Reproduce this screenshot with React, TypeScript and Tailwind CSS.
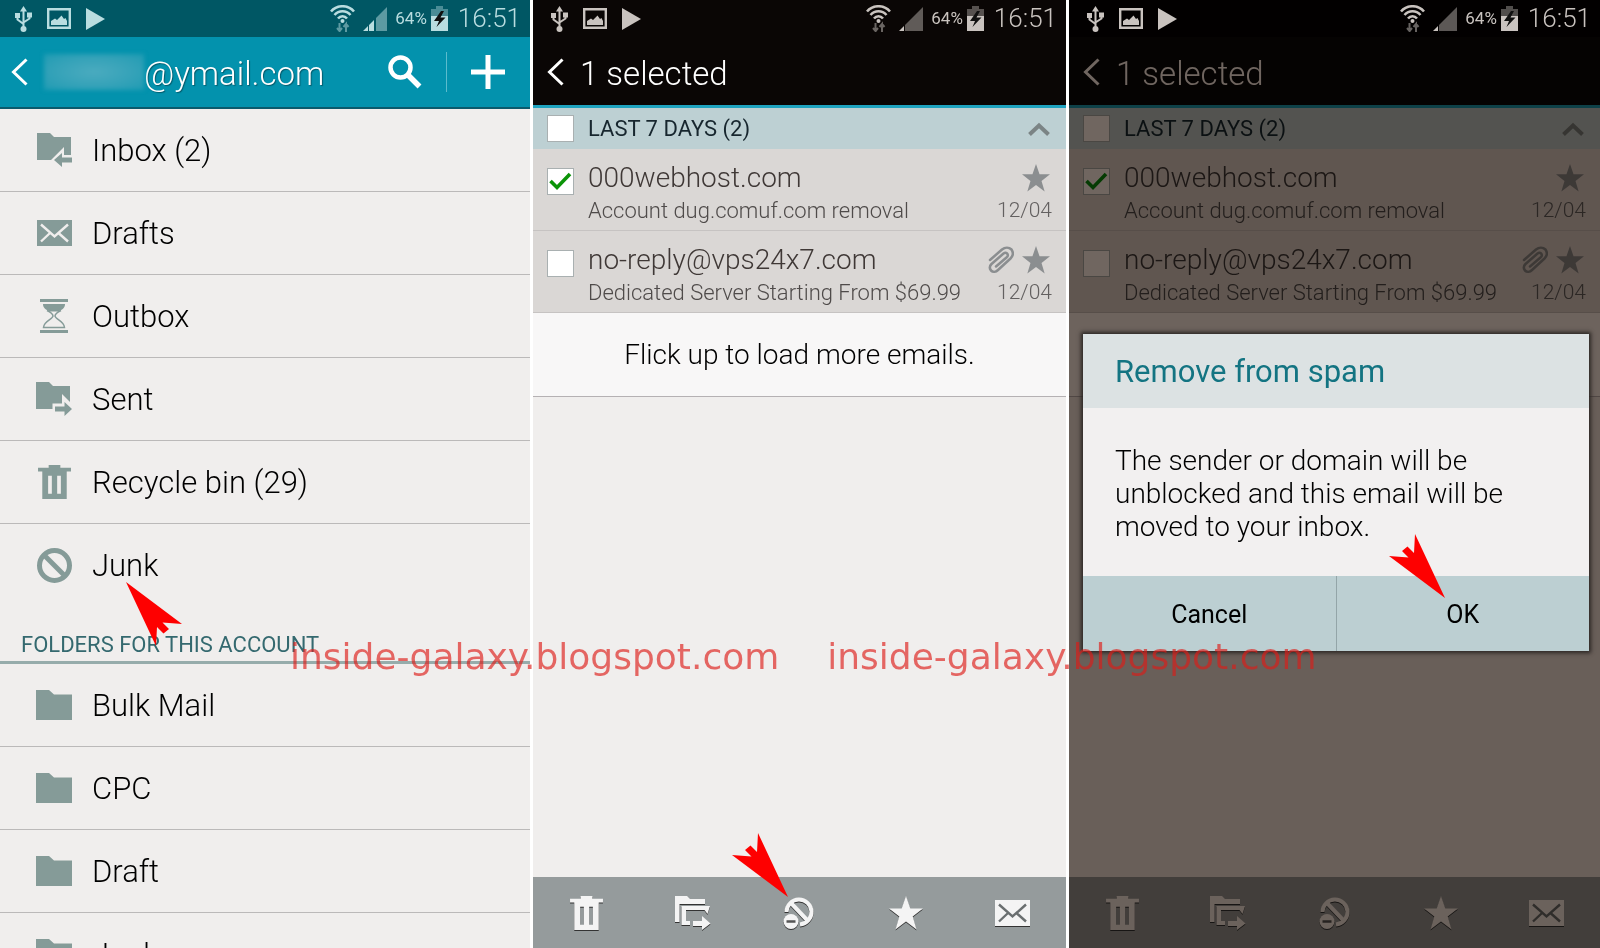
import type { ReactNode } from 'react'

const menuFolders = [
  { label: 'Inbox (2)', icon: <FolderInIcon /> },
  { label: 'Drafts', icon: <EnvelopeIcon line="#f0eeed" /> },
  { label: 'Outbox', icon: <HourglassIcon /> },
  { label: 'Sent', icon: <FolderOutIcon /> },
  { label: 'Recycle bin (29)', icon: <TrashIcon /> },
]

const accountFolders = ['Bulk Mail', 'CPC', 'Draft', 'Junk']

const emails = [
  { sender: '000webhost.com', subject: 'Account dug.comuf.com removal', date: '12/04', checked: true, attachment: false },
  { sender: 'no-reply@vps24x7.com', subject: 'Dedicated Server Starting From $69.99', date: '12/04', checked: false, attachment: true },
]

function FolderInIcon() {
  return (
    <svg width="35" height="34" viewBox="0 0 35 34" fill="currentColor">
      <path d="M0 0H13L17 4H34V22H27V14L14 27H0Z" />
      <path d="M17 27L25 20V24.5H35V29.5H25V34Z" />
    </svg>
  )
}

function FolderOutIcon() {
  return (
    <svg width="36" height="34" viewBox="0 0 36 34" fill="currentColor">
      <path d="M0 0H13L17 4H34V20L26 12V21.5H16.5V27H0Z" />
      <path d="M19 24.5H28.5V20L36 27L28.5 34V29.5H19Z" />
    </svg>
  )
}

function FolderIcon() {
  return (
    <svg width="36" height="30" viewBox="0 0 36 30" fill="currentColor">
      <path d="M0 0H13L18 4.5H36V30H0Z" />
    </svg>
  )
}

function EnvelopeIcon({ line }: { line: string }) {
  return (
    <svg width="35" height="26" viewBox="0 0 35 26" fill="none">
      <path d="M0 0H35V26H0Z" fill="currentColor" />
      <path d="M4 4.5L17.5 16.5L31 4.5M4 21.5L12.5 13.5M31 21.5L22 13.5" stroke={line} strokeWidth="2.4" />
    </svg>
  )
}

function HourglassIcon() {
  return (
    <svg width="28" height="34" viewBox="0 0 28 34" fill="none">
      <path d="M0 0H28V3H0ZM0 31H28V34H0Z" fill="currentColor" />
      <path d="M3 5H25C25 9 22 11 18 12.5H10C6 11 3 9 3 5Z" fill="currentColor" />
      <path d="M7 11.5C10 13 13 15 13 17C13 20 3.5 22 3.5 28.5H24.5C24.5 22 15 20 15 17C15 15 18 13 21 11.5" stroke="currentColor" strokeWidth="1.5" />
    </svg>
  )
}

function TrashIcon() {
  return (
    <svg width="33" height="34" viewBox="0 0 31 32" fill="currentColor">
      <path fillRule="evenodd" d="M10 0H21V2.5H31V6H27V32H4V6H0V2.5H10ZM9.5 10V27H13V10ZM18 10V27H21.5V10Z" />
    </svg>
  )
}

function BlockIcon() {
  return (
    <svg width="35" height="35" viewBox="0 0 35 35" fill="none" stroke="currentColor" strokeWidth="5">
      <circle cx="17.5" cy="17.5" r="15" />
      <path d="M7 7L28 28" />
    </svg>
  )
}

function MoveIcon() {
  return (
    <svg width="36" height="34" viewBox="0 0 36 34" fill="currentColor">
      <path d="M0 0H12L15 3H30V8H4.5V26H0Z" />
      <path d="M6.5 10H35L32.5 18L29.5 14H11V25H15V29H6.5Z" />
      <path d="M18 25H27V20L35.5 27.5L27 34V30H18Z" />
    </svg>
  )
}

function NotSpamIcon() {
  return (
    <svg width="32" height="34" viewBox="0 0 32 34" fill="none">
      <path d="M3.5 16A12.500 12.500 0 1 1 17 28.500" stroke="currentColor" strokeWidth="4" />
      <path d="M7 6L25 25" stroke="currentColor" strokeWidth="4" />
      <circle cx="8" cy="25.5" r="7.5" fill="currentColor" />
      <path d="M3.5 25.5H12.5" stroke="#555" strokeWidth="2.5" />
    </svg>
  )
}

function StarIcon({ size }: { size: number }) {
  return (
    <svg width={size} height={size} viewBox="0 0 34 34" fill="currentColor">
      <path d="M17 0L21.3 12.5H34L23.7 20.5L27.5 33.5L17 25.6L6.5 33.5L10.3 20.5L0 12.5H12.7Z" />
    </svg>
  )
}

function ClipIcon() {
  return (
    <svg width="26" height="28" viewBox="0 0 26 28" fill="none" stroke="currentColor" strokeWidth="2.5" strokeLinecap="round" strokeLinejoin="round">
      <path d="M2 14L14 3.5C17 1 21 1 23.5 3.5C25.5 6.5 25 10 22.5 12.5L10 24C8 26 5 26.5 3 24.5C1.5 22.5 1.5 20 3.5 18L15.5 7.5C17 6.5 18.5 6.5 19.5 8C20.3 9.5 19.8 10.5 18.5 11.5L8 20.5" />
    </svg>
  )
}

function ChevronLeft() {
  return (
    <svg width="17" height="28" viewBox="0 0 17 28" fill="none" stroke="currentColor" strokeWidth="3">
      <path d="M15.5 1.5L2.5 14L15.5 26.5" />
    </svg>
  )
}

function ArrowPointer({ className }: { className: string }) {
  return (
    <svg className={`pointer-events-none absolute z-20 ${className}`} width="56" height="64" viewBox="0 0 56 64" fill="#fe0000">
      <path d="M56 64L26 0L25 19L18.5 12.5L13 17L19.5 23.5L0 22Z" />
    </svg>
  )
}

function StatusBar({ theme, bars }: { theme: string; bars: number }) {
  return (
    <div className={`flex h-[37px] shrink-0 items-center justify-between pr-[9px] ${theme}`}>
      <div className="flex items-center gap-[15px]">
        <svg width="17" height="26" viewBox="0 0 17 26" fill="none" stroke="currentColor" strokeWidth="2">
          <path d="M8.5 4V22M2.5 9V13.5L8.5 18M14.5 9V12.5L8.5 16.5" />
          <path d="M8.5 0L12 5.5H5ZM0 7H5V12H0ZM12 6.5H17V11.5H12Z" fill="currentColor" stroke="none" />
          <circle cx="8.5" cy="23" r="3" fill="currentColor" stroke="none" />
        </svg>
        <svg width="24" height="21" viewBox="0 0 24 21" fill="none">
          <path d="M1.2 1.2H22.8V19.8H1.2Z" stroke="currentColor" strokeWidth="2.4" />
          <path d="M4 17V13L8 10.5L10 12L14.5 7.5L17 11L18.5 10L20 13V17Z" fill="currentColor" />
        </svg>
        <svg width="19" height="22" viewBox="0 0 19 22" fill="currentColor">
          <path d="M0 0L19 11L0 22Z" />
        </svg>
      </div>
      <div className="flex items-center">
        <svg className="mr-2" width="25" height="27" viewBox="0 0 25 27" fill="none" stroke="currentColor">
          <path d="M1 6.5C7 -0.5 18 -0.5 24 6.5M4.5 10C9 5 16 5 20.5 10M8 13.5C10.5 10.5 14.5 10.5 17 13.5" strokeWidth="2.6" />
          <circle cx="12.5" cy="16" r="2" fill="currentColor" stroke="none" />
          <path d="M9.5 18V26L7 23M9.5 26L12 23M16 27V19L13.5 22M16 19L18.5 22" strokeWidth="2" opacity="0.5" />
        </svg>
        {bars === 1 ? (
          <svg className="mr-2" width="24" height="24" viewBox="0 0 24 24" fill="currentColor">
            <path d="M24 0V24H6V18Z" opacity="0.45" />
            <path d="M5 19V24H0Z" />
          </svg>
        ) : (
          <svg className="mr-2" width="24" height="24" viewBox="0 0 24 24" fill="currentColor">
            <path d="M24 0V24H13V11Z" opacity="0.5" />
            <path d="M5 19V24H0ZM11 13V24H6V18Z" />
          </svg>
        )}
        <span className="mr-1 text-[17px]">64%</span>
        <svg className="mr-[10px]" width="17" height="25" viewBox="0 0 17 25">
          <path d="M5 0H12V3H17V10H0V3H5Z" fill="currentColor" opacity="0.4" />
          <path d="M0 10H17V25H0Z" fill="currentColor" />
          <path d="M10 5L3 15H8L5.5 21L14.5 11.5H9.5L13 5Z" fill="#101010" />
        </svg>
        <span className="text-[26px] font-light">16:51</span>
      </div>
    </div>
  )
}

function FolderRow({ icon, label, children, last }: { icon: ReactNode; label: string; children?: ReactNode; last?: boolean }) {
  return (
    <li className={`relative h-[83px] shrink-0 ${last ? '' : 'border-b border-[#bbb9b9]'}`}>
      <button type="button" className="flex h-full w-full items-center gap-5 pl-9 text-left text-[31px] font-light text-black">
        <span className="flex w-9 justify-center text-[#859b98]">{icon}</span>
        <span className="pt-0.5">{label}</span>
      </button>
      {children}
    </li>
  )
}

function FolderPanel() {
  return (
    <section className="flex min-w-0 flex-col overflow-hidden bg-[#f0eeed]">
      <StatusBar theme="bg-[#005764] pl-[15px] text-[#b9dde0]" bars={2} />
      <header className="flex h-[72px] shrink-0 items-center border-b-2 border-[#0a5a6c] bg-[#0392ad] pr-[25px] pl-[11px] text-white">
        <button type="button" aria-label="Back"><ChevronLeft /></button>
        <span className="ml-4 h-9 w-[100px] bg-radial from-[#4aabbf] to-[#1d9bb3] blur-[2px]" />
        <h1 className="flex-1 pt-1 text-[33px] font-light [text-shadow:1px_1px_1px_#055a6b]">@ymail.com</h1>
        <button type="button" aria-label="Search">
          <svg width="34" height="34" viewBox="0 0 34 34" fill="none" stroke="currentColor">
            <circle cx="12.5" cy="12.5" r="10" strokeWidth="4.5" />
            <path d="M20 20L31.5 31.5" strokeWidth="5.5" />
          </svg>
        </button>
        <span className="mx-6 h-10 w-px bg-[#5cbccd]" />
        <button type="button" aria-label="Add account">
          <svg width="34" height="34" viewBox="0 0 34 34" fill="none" stroke="currentColor" strokeWidth="5">
            <path d="M17 0V34M0 17H34" />
          </svg>
        </button>
      </header>
      <ul className="flex flex-col">
        {menuFolders.map((folder) => (
          <FolderRow key={folder.label} icon={folder.icon} label={folder.label} />
        ))}
        <FolderRow icon={<BlockIcon />} label="Junk" last>
          <ArrowPointer className="top-[58px] left-[126px] rotate-180" />
        </FolderRow>
      </ul>
      <h2 className="flex h-[57px] shrink-0 items-end border-b-3 border-[#96acab] pl-[21px] text-[22px] leading-8 font-normal text-[#34696f]">
        FOLDERS FOR THIS ACCOUNT
      </h2>
      <ul className="flex flex-col">
        {accountFolders.map((name) => (
          <FolderRow key={name} icon={<FolderIcon />} label={name} />
        ))}
      </ul>
    </section>
  )
}

function Checkbox({ label, checked }: { label: string; checked?: boolean }) {
  return (
    <span className="relative block h-[27px] w-[27px] shrink-0">
      <input
        type="checkbox"
        aria-label={label}
        defaultChecked={checked}
        className="peer block h-full w-full appearance-none border border-[#a9b0b1] bg-white"
      />
      <svg className="pointer-events-none absolute inset-0 hidden peer-checked:block" width="27" height="27" viewBox="0 0 27 27" fill="none">
        <path d="M3.5 13L10 19.5L23 6" stroke="#0b9408" strokeWidth="3.6" />
      </svg>
    </span>
  )
}

function MailList({ hint, pointer }: { hint?: string; pointer?: ReactNode }) {
  return (
    <>
      <header className="flex h-[71px] shrink-0 items-center gap-4 border-b-3 border-[#1fa3c0] bg-[#0a0605] pl-[14px] text-white">
        <button type="button" aria-label="Back" className="pt-0.5"><ChevronLeft /></button>
        <h1 className="pt-1.5 text-[33px] font-light">1 selected</h1>
      </header>
      <div className="flex h-[41px] shrink-0 items-center gap-[14px] bg-[#bdd0d3] pr-4 pl-[14px]">
        <Checkbox label="Select all" />
        <h2 className="flex-1 text-[22px] text-[#17262e]">LAST 7 DAYS (2)</h2>
        <svg width="22" height="14" viewBox="0 0 22 14" fill="none" stroke="#7b8485" strokeWidth="4">
          <path d="M1.5 12.5L11 3.5L20.5 12.5" />
        </svg>
      </div>
      <ul className="shrink-0">
        {emails.map((mail) => (
          <li key={mail.sender} className="flex h-[82px] gap-[14px] border-b border-[#c6c3c2] bg-[#dad7d5] px-[14px]">
            <div className="pt-[19px]"><Checkbox label={mail.sender} checked={mail.checked} /></div>
            <div className="flex-1 pt-[13px] whitespace-nowrap">
              <p className="text-[28px] leading-8 font-light text-[#3f3836]">{mail.sender}</p>
              <p className="text-[22px] leading-[33px] font-light text-[#4f4b4a]">{mail.subject}</p>
            </div>
            <div className="flex flex-col items-end pt-[15px] text-[#8b8e90]">
              <span className="flex items-center gap-2 pr-0.5">
                {mail.attachment && <ClipIcon />}
                <StarIcon size={28} />
              </span>
              <time className="text-[21px] leading-9 font-light text-[#636060]">{mail.date}</time>
            </div>
          </li>
        ))}
      </ul>
      <p className="flex h-[84px] shrink-0 items-center justify-center border-b border-[#b5b1b3] bg-[#f8f7f7] text-[28px] font-light text-black">
        {hint}
      </p>
      <div className="flex-1" />
      <nav className="flex h-[71px] shrink-0 bg-[#959b9c] text-[#f4f4f4]">
        <ToolButton label="Delete"><TrashIcon /></ToolButton>
        <ToolButton label="Move"><MoveIcon /></ToolButton>
        <ToolButton label="Remove from spam" pointer={pointer}><NotSpamIcon /></ToolButton>
        <ToolButton label="Favourite"><StarIcon size={34} /></ToolButton>
        <ToolButton label="Mark as unread"><EnvelopeIcon line="#6a6f70" /></ToolButton>
      </nav>
    </>
  )
}

function ToolButton({ label, children, pointer }: { label: string; children: ReactNode; pointer?: ReactNode }) {
  return (
    <button type="button" aria-label={label} className="relative flex flex-1 items-center justify-center">
      <span className="drop-shadow-[0_1px_0_#333]">{children}</span>
      {pointer}
    </button>
  )
}

function SpamDialog() {
  return (
    <div role="dialog" aria-label="Remove from spam" className="absolute top-[334px] right-[11px] left-[14px] z-10 bg-[#f2f0f0] shadow-[0_0_4px_2px_#2a2523]">
      <h2 className="flex h-[74px] items-center bg-[#dce2e3] pt-0.5 pl-8 text-[31px] text-[#137482]">Remove from spam</h2>
      <p className="h-[168px] pt-9 pr-16 pl-8 text-[28px] leading-[33px] font-light text-black">
        The sender or domain will be unblocked and this email will be moved to your inbox.
      </p>
      <div className="flex h-[75px] divide-x divide-[#93a5a8] bg-[#bccfd2] text-[25px] text-black">
        <button type="button" className="flex-1 pt-0.5">Cancel</button>
        <button type="button" className="relative flex-1 pt-0.5">
          OK
          <ArrowPointer className="-top-[42px] left-[52px]" />
        </button>
      </div>
    </div>
  )
}

export default function App() {
  return (
    <main className="relative grid h-screen grid-cols-[530fr_533fr_531fr] gap-[3px] overflow-hidden bg-white font-['Roboto',sans-serif]">
      <FolderPanel />
      <section className="flex min-w-0 flex-col overflow-hidden bg-[#f0eeed]">
        <StatusBar theme="bg-[#0a0605] pl-[18px] text-[#c9c3bf]" bars={1} />
        <MailList hint="Flick up to load more emails." pointer={<ArrowPointer className="-top-11 -left-[14px]" />} />
      </section>
      <section className="relative flex min-w-0 flex-col overflow-hidden bg-[#f0eeed]">
        <StatusBar theme="bg-[#020000] pl-[18px] text-[#c9c3bf]" bars={1} />
        <MailList />
        <div className="absolute inset-x-0 top-[37px] bottom-0 bg-[#706660] mix-blend-multiply" />
        <SpamDialog />
      </section>
      <p className="pointer-events-none absolute top-[635px] left-[290px] z-20 flex gap-12 font-['DejaVu_Sans',sans-serif] text-[36px] leading-[44px] whitespace-nowrap text-[#dd1c17]/65">
        <span>inside-galaxy.blogspot.com</span>
        <span>inside-galaxy.blogspot.com</span>
      </p>
    </main>
  )
}
